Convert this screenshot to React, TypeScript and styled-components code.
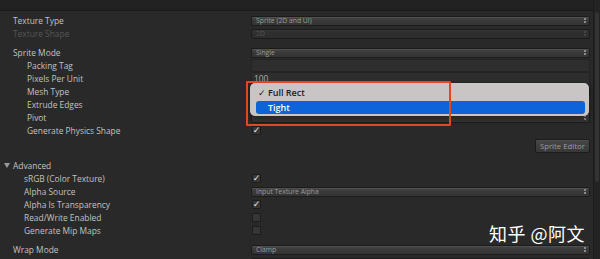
import React from "react";
import styled, { createGlobalStyle } from "styled-components";

const Global = createGlobalStyle`
  html, body { margin: 0; padding: 0; background: #292929; }
  body { width: 600px; height: 259px; overflow: hidden; }
  #root { width: 600px; height: 259px; }
`;

const Page = styled.div`
  position: relative;
  width: 600px;
  height: 259px;
  overflow: hidden;
  background: #292929;
  font-family: "Open Sans", "DejaVu Sans", sans-serif;
  display: flex;
`;

const Inspector = styled.div`
  flex: 1;
  display: flex;
  flex-direction: column;
`;

const Header = styled.div`
  height: 10px;
  flex-shrink: 0;
  background: #222222;
  border-bottom: 1px solid #1b1b1b;
  margin-bottom: 3px;
`;

const Scrollbar = styled.div`
  width: 6px;
  flex-shrink: 0;
  background: #232323;
  border-left: 1px solid #1a1a1a;
  display: flex;
  flex-direction: column;
  padding-top: 12px;
`;

const Thumb = styled.div`
  margin: 0 1px;
  height: 170px;
  border-radius: 2px;
  background: #333333;
`;

const Row = styled.div<{ $h?: number }>`
  height: ${(p) => p.$h ?? 13}px;
  flex-shrink: 0;
  display: flex;
  align-items: center;
`;

const Spacer = styled.div<{ $h: number }>`
  height: ${(p) => p.$h}px;
  flex-shrink: 0;
`;

const Label = styled.div<{ $indent?: number; $disabled?: boolean }>`
  width: ${(p) => 251 - (p.$indent ?? 13)}px;
  padding-left: ${(p) => p.$indent ?? 13}px;
  flex-shrink: 0;
  font-size: 8.4px;
  line-height: 13px;
  color: ${(p) => (p.$disabled ? "#565656" : "#c2c2c2")};
  white-space: nowrap;
  display: flex;
  align-items: center;
  gap: 3px;
`;

const Triangle = styled.span`
  margin-left: -9px;
  width: 0;
  height: 0;
  border-left: 3px solid transparent;
  border-right: 3px solid transparent;
  border-top: 5px solid #9a9a9a;
`;

const Control = styled.div`
  flex: 1;
  margin-right: 3px;
  display: flex;
  align-items: center;
`;

const Popup = styled.div<{ $disabled?: boolean }>`
  flex: 1;
  height: 8px;
  border-radius: 2px;
  border: 1px solid #1c1c1c;
  background: ${(p) =>
    p.$disabled
      ? "linear-gradient(#313131, #2d2d2d)"
      : "linear-gradient(#474747, #3a3a3a 40%, #343434)"};
  box-shadow: inset 0 1px 0 ${(p) => (p.$disabled ? "#363636" : "#505050")};
  display: flex;
  align-items: center;
  justify-content: space-between;
  padding: 0 3px 0 4px;
  font-size: 6.8px;
  color: ${(p) => (p.$disabled ? "#555" : "#9c9c9c")};
  white-space: nowrap;
`;

const Arrows = styled.span<{ $disabled?: boolean }>`
  display: flex;
  flex-direction: column;
  gap: 1px;
  &::before,
  &::after {
    content: "";
    display: block;
    width: 2px;
    height: 2px;
    background: ${(p) => (p.$disabled ? "#444" : "#8a8a8a")};
  }
`;

const TextField = styled.div`
  flex: 1;
  height: 11px;
  border-radius: 2px;
  background: #2e2e2e;
  border: 1px solid #242424;
  display: flex;
  align-items: center;
  padding: 0 2px;
  font-size: 8.4px;
  color: #b0b0b0;
`;

const Check = styled.div`
  width: 7px;
  height: 7px;
  margin-left: 1px;
  border-radius: 1px;
  background: #363636;
  border: 1px solid #1c1c1c;
  display: flex;
  align-items: center;
  justify-content: center;
  font-size: 9px;
  line-height: 1;
  color: #e6e6e6;
  font-family: "DejaVu Sans", sans-serif;
`;

const ButtonRow = styled(Row)`
  justify-content: flex-end;
  padding-right: 3px;
`;

const SmallButton = styled.div`
  height: 12px;
  padding: 0 4px;
  border-radius: 2px;
  border: 1px solid #1c1c1c;
  background: linear-gradient(#464646, #383838);
  box-shadow: inset 0 1px 0 #4e4e4e;
  font-size: 7.8px;
  color: #9c9c9c;
  display: flex;
  align-items: center;
  white-space: nowrap;
`;

const Menu = styled.div`
  position: absolute;
  left: 250px;
  top: 83px;
  width: 339px;
  height: 33px;
  box-sizing: border-box;
  border-radius: 5px;
  background: #c9c5c5;
  box-shadow: 0 2px 6px rgba(0, 0, 0, 0.5);
  padding: 3px 4px 0 6px;
  display: flex;
  flex-direction: column;
  font-family: "Open Sans", "DejaVu Sans", sans-serif;
`;

const MenuItem = styled.div<{ $selected?: boolean }>`
  height: 13px;
  border-radius: 3px;
  display: flex;
  align-items: center;
  padding-left: 2px;
  font-size: 9px;
  font-weight: 600;
  color: ${(p) => (p.$selected ? "#ffffff" : "#1c1c1c")};
  background: ${(p) => (p.$selected ? "#0d64d8" : "transparent")};
  margin-top: ${(p) => (p.$selected ? "2px" : "0")};
`;

const Tick = styled.span`
  width: 10px;
  font-size: 9px;
  font-family: "DejaVu Sans", sans-serif;
`;

const Highlight = styled.div`
  position: absolute;
  left: 246px;
  top: 81px;
  width: 201px;
  height: 41px;
  border: 2px solid #e1481e;
  border-radius: 1px;
  pointer-events: none;
`;

const Watermark = styled.div`
  position: absolute;
  left: 489px;
  top: 220px;
  font-family: "Noto Sans CJK SC", "Noto Sans", sans-serif;
  font-size: 18px;
  color: #ffffff;
  white-space: nowrap;
  letter-spacing: 0.5px;
`;

const Field: React.FC<{ value?: string; disabled?: boolean }> = ({ value, disabled }) => (
  <Popup $disabled={disabled}>
    <span>{value}</span>
    <Arrows $disabled={disabled} />
  </Popup>
);

export default function App() {
  return (
    <>
      <Global />
      <Page>
        <Inspector>
          <Header />
          <Row>
            <Label>Texture Type</Label>
            <Control>
              <Field value="Sprite (2D and UI)" />
            </Control>
          </Row>
          <Row>
            <Label $disabled>Texture Shape</Label>
            <Control>
              <Field value="2D" disabled />
            </Control>
          </Row>
          <Spacer $h={6} />
          <Row>
            <Label>Sprite Mode</Label>
            <Control>
              <Field value="Single" />
            </Control>
          </Row>
          <Row>
            <Label $indent={27}>Packing Tag</Label>
            <Control>
              <TextField />
            </Control>
          </Row>
          <Row>
            <Label $indent={27}>Pixels Per Unit</Label>
            <Control>
              <TextField>100</TextField>
            </Control>
          </Row>
          <Row>
            <Label $indent={27}>Mesh Type</Label>
            <Control>
              <Field />
            </Control>
          </Row>
          <Row>
            <Label $indent={27}>Extrude Edges</Label>
            <Control />
          </Row>
          <Row>
            <Label $indent={27}>Pivot</Label>
            <Control>
              <Field />
            </Control>
          </Row>
          <Row>
            <Label $indent={27}>Generate Physics Shape</Label>
            <Control>
              <Check>✓</Check>
            </Control>
          </Row>
          <ButtonRow $h={17}>
            <SmallButton>Sprite Editor</SmallButton>
          </ButtonRow>
          <Spacer $h={5} />
          <Row>
            <Label>
              <Triangle />
              Advanced
            </Label>
          </Row>
          <Row>
            <Label $indent={24}>sRGB (Color Texture)</Label>
            <Control>
              <Check>✓</Check>
            </Control>
          </Row>
          <Row>
            <Label $indent={24}>Alpha Source</Label>
            <Control>
              <Field value="Input Texture Alpha" />
            </Control>
          </Row>
          <Row>
            <Label $indent={24}>Alpha Is Transparency</Label>
            <Control>
              <Check>✓</Check>
            </Control>
          </Row>
          <Row>
            <Label $indent={24}>Read/Write Enabled</Label>
            <Control>
              <Check />
            </Control>
          </Row>
          <Row>
            <Label $indent={24}>Generate Mip Maps</Label>
            <Control>
              <Check />
            </Control>
          </Row>
          <Spacer $h={6} />
          <Row>
            <Label>Wrap Mode</Label>
            <Control>
              <Field value="Clamp" />
            </Control>
          </Row>
          <Row>
            <Label />
            <Control>
              <Field />
            </Control>
          </Row>
        </Inspector>
        <Scrollbar>
          <Thumb />
        </Scrollbar>
        <Menu>
          <MenuItem>
            <Tick>✓</Tick>Full Rect
          </MenuItem>
          <MenuItem $selected>
            <Tick />
            Tight
          </MenuItem>
        </Menu>
        <Highlight />
        <Watermark>知乎 @阿文</Watermark>
      </Page>
    </>
  );
}
